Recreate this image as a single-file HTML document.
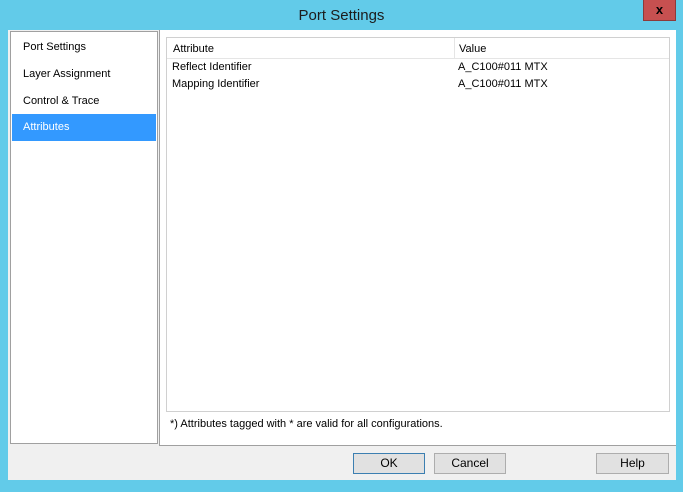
<!DOCTYPE html>
<html><head><style>
*{margin:0;padding:0;box-sizing:border-box}
body{width:683px;height:492px;background:#62cbe9;position:relative;overflow:hidden;font-family:"Liberation Sans",sans-serif;font-size:11px;color:#000}
.a{position:absolute}
.title{left:0;top:7px;width:683px;text-align:center;font-size:15px;color:#1c1c1c}
.close{left:643px;top:0;width:33px;height:21px;background:#c75050;border:1px solid #8d3a3a;border-top:none;color:#000;font-weight:bold;font-size:13px;text-align:center;line-height:19px}
.client{left:8px;top:30px;width:668px;height:450px;background:#f0f0f0}
.nav{left:10px;top:31px;width:148px;height:413px;background:#fff;border:1px solid #a0a0a0}
.nav div{position:absolute;left:1px;width:144px;height:27px;padding-left:11px;line-height:27px}
.panel{left:159px;top:30px;width:517px;height:416px;background:#fff;border:1px solid #a0a0a0;border-top:none;border-right:none}
.list{left:166px;top:37px;width:504px;height:375px;background:#fff;border:1px solid #d0d0d0}
.btn{top:453px;height:21px;background:#e1e1e1;border:1px solid #adadad;text-align:center;line-height:19px;font-size:12px}
</style></head><body>
<div class="a title">Port Settings</div>
<div class="a close">x</div>
<div class="a client"></div>
<div class="a nav">
<div style="top:2px">Port Settings</div>
<div style="top:29px">Layer Assignment</div>
<div style="top:56px">Control &amp; Trace</div>
<div style="top:82px;background:#3399ff;color:#fff">Attributes</div>
</div>
<div class="a panel"></div>
<div class="a list">
<div class="a" style="left:0;top:0;width:502px;height:21px;border-bottom:1px solid #e5e5e5"></div>
<div class="a" style="left:287px;top:0;width:1px;height:21px;background:#e5e5e5"></div>
<div class="a" style="left:6px;top:5px">Attribute</div>
<div class="a" style="left:292px;top:5px">Value</div>
<div class="a" style="left:5px;top:23px">Reflect Identifier</div>
<div class="a" style="left:291px;top:23px">A_C100#011 MTX</div>
<div class="a" style="left:5px;top:40px">Mapping Identifier</div>
<div class="a" style="left:291px;top:40px">A_C100#011 MTX</div>
</div>
<div class="a" style="left:170px;top:418px;font-size:11px">*) Attributes tagged with * are valid for all configurations.</div>
<div class="a btn" style="left:353px;width:72px;border-color:#3c7fb1">OK</div>
<div class="a btn" style="left:434px;width:72px">Cancel</div>
<div class="a btn" style="left:596px;width:73px">Help</div>
</body></html>
